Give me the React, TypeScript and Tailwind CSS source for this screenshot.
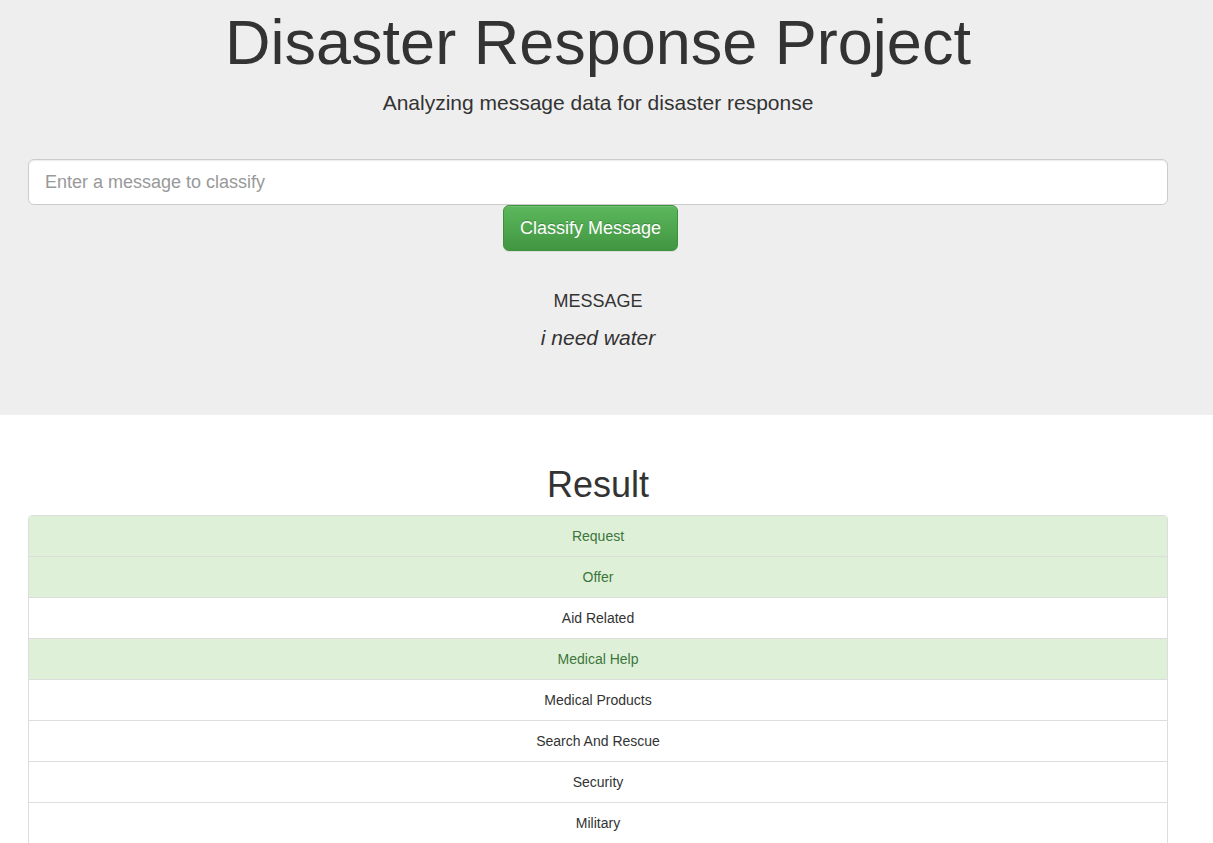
import { useState } from "react";

const categories: { name: string; hit: boolean }[] = [
  { name: "Request", hit: true },
  { name: "Offer", hit: true },
  { name: "Aid Related", hit: false },
  { name: "Medical Help", hit: true },
  { name: "Medical Products", hit: false },
  { name: "Search And Rescue", hit: false },
  { name: "Security", hit: false },
  { name: "Military", hit: false },
  { name: "Child Alone", hit: false },
  { name: "Water", hit: true },
];

export default function App() {
  const [query, setQuery] = useState("");

  return (
    <div className="min-h-screen bg-white text-[#333] font-['Liberation_Sans',Arial,sans-serif] text-[14px] leading-[20px]">
      {/* Jumbotron */}
      <div className="bg-[#eeeeee] pt-[8px] pb-[62px]">
        <div className="ml-[13px] w-[1170px] px-[15px]">
          <h1 className="text-center text-[63px] leading-[69.3px] mb-[11px]">Disaster Response Project</h1>
          <p className="text-center text-[21px] leading-[30px]">Analyzing message data for disaster response</p>

          <form className="mt-[41px]" onSubmit={(e) => e.preventDefault()}>
            <input
              type="text"
              value={query}
              onChange={(e) => setQuery(e.target.value)}
              placeholder="Enter a message to classify"
              className="block w-full h-[46px] px-4 text-[18px] bg-white border border-[#ccc] rounded-[6px] placeholder:text-[#999] outline-none shadow-[inset_0_1px_1px_rgba(0,0,0,0.075)]"
            />
            <div className="text-center">
              <button
                type="submit"
                className="inline-block mr-[15px] h-[46px] px-4 text-[18px] text-white border border-[#3e8f3e] rounded-[6px] bg-[linear-gradient(to_bottom,#5cb85c_0,#419641_100%)] [text-shadow:0_-1px_0_rgba(0,0,0,0.2)] shadow-[inset_0_1px_0_rgba(255,255,255,0.15),0_1px_1px_rgba(0,0,0,0.075)]"
              >
                Classify Message
              </button>
            </div>
          </form>

          <h4 className="mt-[41px] mb-[11px] text-center text-[18px] leading-[19.8px]">MESSAGE</h4>
          <p className="text-center text-[21px] leading-[30px] italic">i need water</p>
        </div>
      </div>

      {/* Result */}
      <div className="ml-[13px] w-[1170px] px-[15px]">
        <h1 className="mt-[50px] mb-[10px] text-center text-[36px] leading-[39.6px]">Result</h1>
        <ul className="border border-[#ddd] rounded-[4px] divide-y divide-[#ddd] overflow-hidden">
          {categories.map((c) => (
            <li
              key={c.name}
              className={
                c.hit
                  ? "py-[10px] px-[15px] text-center bg-[#dff0d8] text-[#3c763d]"
                  : "py-[10px] px-[15px] text-center bg-white"
              }
            >
              {c.name}
            </li>
          ))}
        </ul>
      </div>
    </div>
  );
}
